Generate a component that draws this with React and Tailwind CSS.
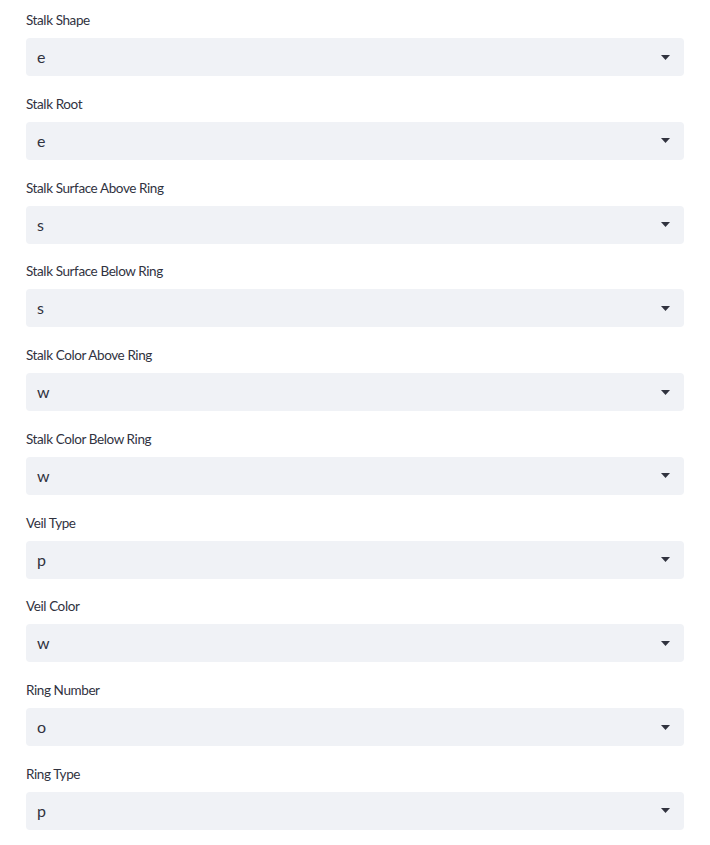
import React from 'react';

const fields = [
    ["Stalk Shape", "e"],
    ["Stalk Root", "e"],
    ["Stalk Surface Above Ring", "s"],
    ["Stalk Surface Below Ring", "s"],
    ["Stalk Color Above Ring", "w"],
    ["Stalk Color Below Ring", "w"],
    ["Veil Type", "p"],
    ["Veil Color", "w"],
    ["Ring Number", "o"],
    ["Ring Type", "p"],
];

const SelectBox = ({ label, value }) => {
    return (
        <div className="flex flex-col">
            <label className="text-[13.5px] leading-[20px] tracking-[-0.4px] text-[#31333f] mb-2">{label}</label>
            <div className="h-[38px] bg-[#f0f2f6] rounded-[4px] flex items-center justify-between pl-[11px] pr-[14px]">
                <span className="text-[16px] text-[#31333f]">{value}</span>
                <svg width="9" height="5" viewBox="0 0 9 5" className="fill-[#31333f]">
                    <path d="M0 0h9L4.5 5z" />
                </svg>
            </div>
        </div>
    );
};

export default function App() {
    return (
        <div className="w-[710px] min-h-[845px] bg-white px-[26px] pt-[10px] flex flex-col gap-[17.75px]" style={{ fontFamily: 'Lato, "Open Sans", sans-serif' }}>
            {fields.map(([label, value]) => (
                <SelectBox key={label} label={label} value={value} />
            ))}
        </div>
    );
}
